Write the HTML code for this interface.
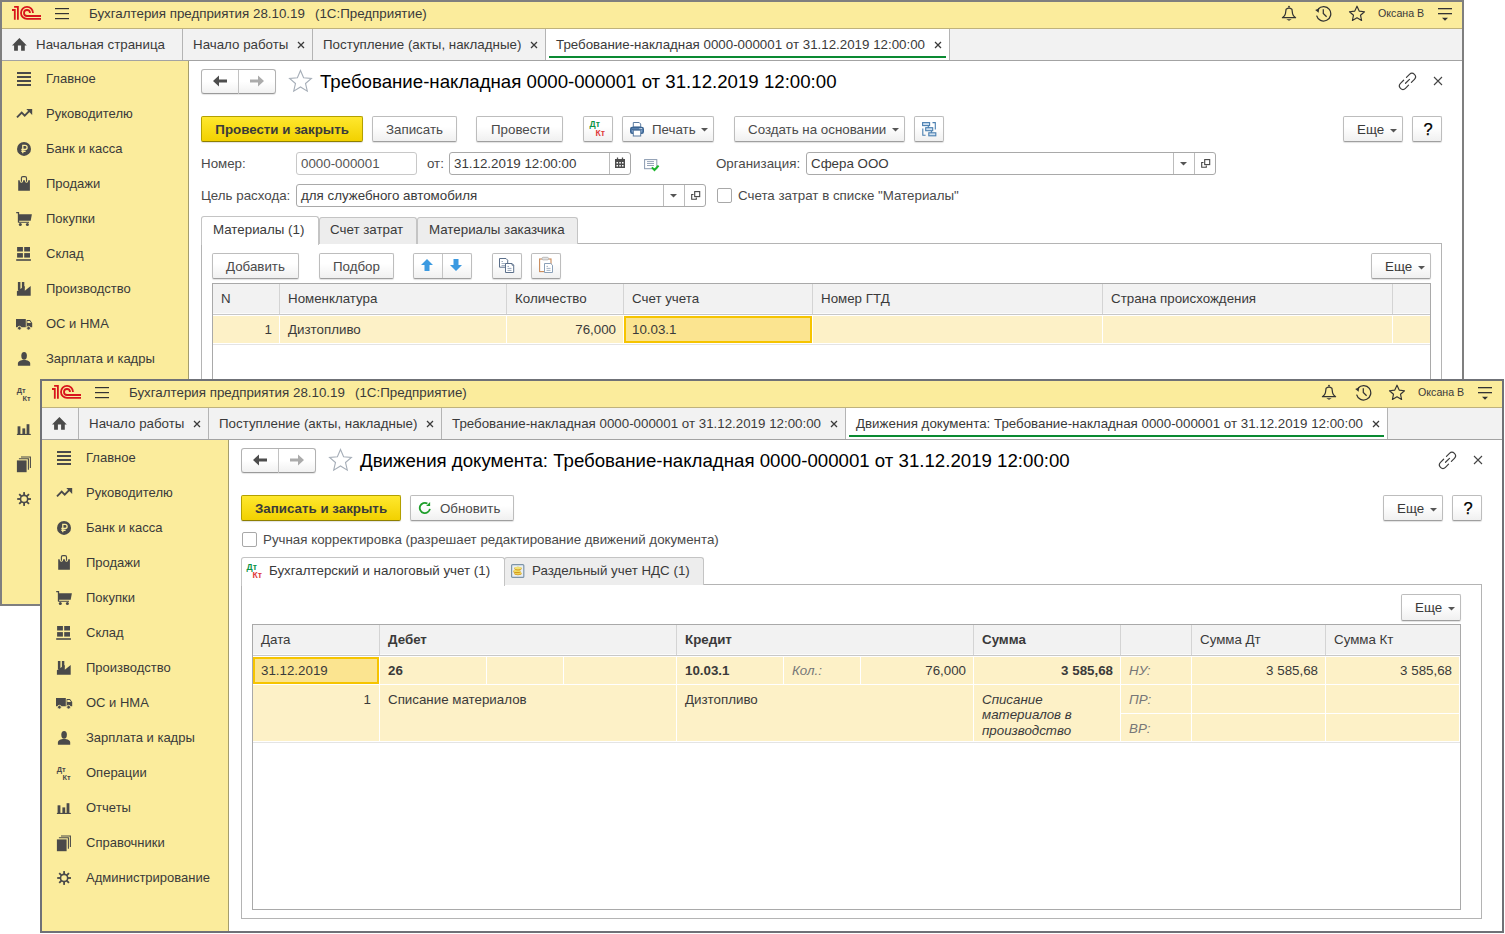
<!DOCTYPE html><html><head><meta charset="utf-8"><style>
html,body{margin:0;padding:0;background:#fff;width:1505px;height:934px;overflow:hidden;position:relative;font-family:"Liberation Sans",sans-serif;}
.t{position:absolute;white-space:pre;line-height:1;font-family:"Liberation Sans",sans-serif;}
.b{position:absolute;}
.win{position:absolute;overflow:hidden;background:#fff;}
</style></head><body>
<div class="win" style="left:0px;top:0px;width:1464px;height:606px;">
<div class="b" style="left:0px;top:0px;width:1464px;height:2px;background:#7f7f7f;"></div>
<div class="b" style="left:0px;top:604px;width:1464px;height:2px;background:#7f7f7f;"></div>
<div class="b" style="left:0px;top:0px;width:2px;height:606px;background:#7f7f7f;"></div>
<div class="b" style="left:1462px;top:0px;width:2px;height:606px;background:#7f7f7f;"></div>
<div class="b" style="left:2px;top:2px;width:1460px;height:26px;background:#fbec9c;"></div>
<div class="b" style="left:2px;top:28px;width:1460px;height:1px;background:#bfb27c;"></div>
<svg class="b" style="left:8px;top:2px;" width="40" height="22" viewBox="0 0 40 22"><g fill="none" stroke="#d8141c" stroke-width="1.8"><path d="M4 8H6.8V17.8"/><path d="M6.1 4.8H9.9V17.8"/><path d="M25 10.9A6 6 0 1 0 19 16.9H33"/><path d="M22 11A3 3 0 1 0 19 14H33"/></g></svg>
<svg class="b" style="left:55px;top:8px;" width="15" height="12" viewBox="0 0 15 12"><g fill="#333"><rect x="0" y="0" width="14" height="1.2"/><rect x="0" y="5" width="14" height="1.2"/><rect x="0" y="10" width="14" height="1.2"/></g></svg>
<div class="t" style="left:89px;top:6.72px;font-size:13.33px;color:#3a3a3a;">Бухгалтерия предприятия 28.10.19</div>
<div class="t" style="left:315px;top:6.72px;font-size:13.33px;color:#3a3a3a;">(1С:Предприятие)</div>
<svg class="b" style="left:1280px;top:4px;" width="18" height="18" viewBox="0 0 18 18"><circle cx="9" cy="2.7" r="0.9" fill="#333"/><path d="M6.1 5.2Q9 3 11.9 5.2L12.6 9.8Q13 12 15.6 13.7H2.4Q5 12 5.4 9.8Z" fill="none" stroke="#333" stroke-width="1.2" stroke-linejoin="round"/><path d="M6.3 15.3H11.7L9 16.8Z" fill="#333"/></svg>
<svg class="b" style="left:1314px;top:4px;" width="18" height="18" viewBox="0 0 18 18"><path d="M2.6 11.6A7.2 7.2 0 1 0 4.2 5" fill="none" stroke="#333" stroke-width="1.25"/><path d="M1.2 6.1 5.3 4.3 4.6 8.7z" fill="#333"/><path d="M9.3 5.3V9.4L12.6 12.7" fill="none" stroke="#333" stroke-width="1.25"/></svg>
<svg class="b" style="left:1348px;top:5px;" width="18" height="17" viewBox="0 0 18 17"><path d="M9 1.2l2.2 4.9 5.3.6-4 3.5 1.1 5.3L9 12.8l-4.6 2.7 1.1-5.3-4-3.5 5.3-.6z" fill="none" stroke="#333" stroke-width="1.15" stroke-linejoin="round"/></svg>
<div class="t" style="left:1378px;top:7.97px;font-size:10.67px;color:#3a3a3a;">Оксана В</div>
<svg class="b" style="left:1437px;top:7px;" width="16" height="15" viewBox="0 0 16 15"><g fill="#333"><rect x="1" y="1" width="14" height="1.3"/><rect x="1" y="6" width="14" height="1.3"/><path d="M5 10.8h6L8 13.8z"/></g></svg>
<div class="b" style="left:2px;top:29px;width:1460px;height:31px;background:#f2f2f2;"></div>
<div class="b" style="left:2px;top:60px;width:1460px;height:1px;background:#a3a3a3;"></div>
<div class="b" style="left:182px;top:29px;width:1px;height:31px;background:#b4b4b4;"></div>
<svg class="b" style="left:12px;top:38px;" width="16" height="14" viewBox="0 0 16 14"><path d="M7.4 0 14.8 7.5H12.8V12.7H9.1V7.5H5.9V12.7H2.1V7.5H0Z" fill="#4a4a4a"/></svg>
<div class="t" style="left:36px;top:37.72px;font-size:13.33px;color:#3a3a3a;">Начальная страница</div>
<div class="b" style="left:312px;top:29px;width:1px;height:31px;background:#b4b4b4;"></div>
<div class="t" style="left:193px;top:37.72px;font-size:13.33px;color:#3a3a3a;">Начало работы</div>
<svg class="b" style="left:297px;top:41px;" width="8" height="8" viewBox="0 0 8 8"><path d="M1 1 7 7M7 1 1 7" stroke="#3a3a3a" stroke-width="1.25"/></svg>
<div class="b" style="left:545px;top:29px;width:1px;height:31px;background:#b4b4b4;"></div>
<div class="t" style="left:323px;top:37.72px;font-size:13.33px;color:#3a3a3a;">Поступление (акты, накладные)</div>
<svg class="b" style="left:530px;top:41px;" width="8" height="8" viewBox="0 0 8 8"><path d="M1 1 7 7M7 1 1 7" stroke="#3a3a3a" stroke-width="1.25"/></svg>
<div class="b" style="left:546px;top:29px;width:403px;height:31px;background:#ffffff;"></div>
<div class="b" style="left:549px;top:56px;width:397px;height:2px;background:#0a8a32;"></div>
<div class="b" style="left:949px;top:29px;width:1px;height:31px;background:#b4b4b4;"></div>
<div class="t" style="left:556px;top:37.72px;font-size:13.33px;color:#3a3a3a;">Требование-накладная 0000-000001 от 31.12.2019 12:00:00</div>
<svg class="b" style="left:934px;top:41px;" width="8" height="8" viewBox="0 0 8 8"><path d="M1 1 7 7M7 1 1 7" stroke="#3a3a3a" stroke-width="1.25"/></svg>
<div class="b" style="left:2px;top:61px;width:186px;height:543px;background:#fbec9c;"></div>
<div class="b" style="left:188px;top:61px;width:1px;height:543px;background:#a59d6d;"></div>
<svg class="b" style="left:16px;top:70px;" width="16" height="16" viewBox="0 0 16 16"><g fill="#4a4a4a"><rect x="1" y="2" width="14" height="2"/><rect x="1" y="6" width="14" height="2"/><rect x="1" y="10" width="14" height="2"/><rect x="1" y="14" width="14" height="2"/></g></svg>
<div class="t" style="left:46px;top:72px;font-size:13px;color:#3a3a3a;">Главное</div>
<svg class="b" style="left:16px;top:105px;" width="17" height="16" viewBox="0 0 17 16"><path d="M1 12.3 5.7 7.6 8.7 10.6 13.4 5.9" fill="none" stroke="#4a4a4a" stroke-width="1.9"/><path d="M10.3 4H16.2V9.9z" fill="#4a4a4a"/></svg>
<div class="t" style="left:46px;top:107px;font-size:13px;color:#3a3a3a;">Руководителю</div>
<svg class="b" style="left:16px;top:140px;" width="16" height="17" viewBox="0 0 16 17"><circle cx="8" cy="8.9" r="7" fill="#4a4a4a"/><path d="M6.8 13.3V5.3H9a2.1 2.1 0 0 1 0 4.2H5.3M5.3 11.4H9.6" fill="none" stroke="#fbec9c" stroke-width="1.3"/></svg>
<div class="t" style="left:46px;top:142px;font-size:13px;color:#3a3a3a;">Банк и касса</div>
<svg class="b" style="left:16px;top:175px;" width="16" height="17" viewBox="0 0 16 17"><path d="M2.2 5.2H3.7V6.1A1.7 1.7 0 0 0 7.1 6.1V5.2H8.9V6.1A1.65 1.65 0 0 0 12.2 6.1V5.2H13.9V15.8H2.2Z" fill="#4a4a4a"/><path d="M5.4 6.8V3.1Q5.4 1.6 6.9 1.6H9Q10.5 1.6 10.5 3.1V6.8" fill="none" stroke="#4a4a4a" stroke-width="1.15"/></svg>
<div class="t" style="left:46px;top:177px;font-size:13px;color:#3a3a3a;">Продажи</div>
<svg class="b" style="left:16px;top:210px;" width="17" height="17" viewBox="0 0 17 17"><path d="M0.2 2.6H2.5V12.4" fill="none" stroke="#4a4a4a" stroke-width="1.3"/><path d="M2.1 4.2H15.9L14.7 10.7H2.1z" fill="#4a4a4a"/><rect x="2.5" y="11.8" width="10.5" height="1" fill="#4a4a4a"/><circle cx="4.3" cy="14.6" r="1.5" fill="#4a4a4a"/><circle cx="11.4" cy="14.6" r="1.5" fill="#4a4a4a"/></svg>
<div class="t" style="left:46px;top:212px;font-size:13px;color:#3a3a3a;">Покупки</div>
<svg class="b" style="left:16px;top:245px;" width="16" height="17" viewBox="0 0 16 17"><g fill="#4a4a4a"><rect x="1.1" y="2" width="5.8" height="4.5"/><rect x="8.2" y="2" width="5.8" height="4.5"/><rect x="1.1" y="8.1" width="5.8" height="4.5"/><rect x="8.2" y="8.1" width="5.8" height="4.5"/><rect x="0.2" y="14.2" width="14.7" height="1.6"/></g></svg>
<div class="t" style="left:46px;top:247px;font-size:13px;color:#3a3a3a;">Склад</div>
<svg class="b" style="left:16px;top:280px;" width="16" height="17" viewBox="0 0 16 17"><g fill="#4a4a4a"><path d="M0.9 15.7V11.3L8.8 5.9V10.8L14.7 5.9V15.7Z"/><rect x="1.9" y="2" width="2.5" height="8"/><rect x="5.9" y="2" width="2.4" height="6"/></g></svg>
<div class="t" style="left:46px;top:282px;font-size:13px;color:#3a3a3a;">Производство</div>
<svg class="b" style="left:16px;top:315px;" width="17" height="17" viewBox="0 0 17 17"><path d="M0 3.9H9.8V12.3H0zM10.6 5H14L16.2 8V12.3H10.6z" fill="#4a4a4a"/><path d="M11.3 6H13.6L15 8H11.3z" fill="#fbec9c"/><circle cx="3.4" cy="13.2" r="1.9" fill="#4a4a4a" stroke="#fbec9c" stroke-width="0.9"/><circle cx="12.6" cy="13.2" r="1.9" fill="#4a4a4a" stroke="#fbec9c" stroke-width="0.9"/></svg>
<div class="t" style="left:46px;top:317px;font-size:13px;color:#3a3a3a;">ОС и НМА</div>
<svg class="b" style="left:16px;top:350px;" width="16" height="17" viewBox="0 0 16 17"><ellipse cx="8.1" cy="5.85" rx="2.8" ry="3.95" fill="#4a4a4a"/><path d="M1.9 15.7V13.6C1.9 11.1 4.5 9.9 8.1 9.9S14.2 11.1 14.2 13.6V15.7Z" fill="#4a4a4a"/></svg>
<div class="t" style="left:46px;top:352px;font-size:13px;color:#3a3a3a;">Зарплата и кадры</div>
<svg class="b" style="left:16px;top:385px;" width="18" height="18" viewBox="0 0 18 18"><text x="0.8" y="7.6" font-family="Liberation Sans" font-size="7.4" font-weight="bold" fill="#4a4a4a">Дт</text><text x="6.4" y="16.2" font-family="Liberation Sans" font-size="7.4" font-weight="bold" fill="#4a4a4a">Кт</text></svg>
<div class="t" style="left:46px;top:387px;font-size:13px;color:#3a3a3a;">Операции</div>
<svg class="b" style="left:16px;top:420px;" width="16" height="17" viewBox="0 0 16 17"><g fill="#4a4a4a"><rect x="1.6" y="6.3" width="2.8" height="8"/><rect x="6.4" y="8.4" width="2.8" height="6"/><rect x="10.6" y="4.2" width="2.8" height="10"/><rect x="0.9" y="13.9" width="13.9" height="1.1"/></g></svg>
<div class="t" style="left:46px;top:422px;font-size:13px;color:#3a3a3a;">Отчеты</div>
<svg class="b" style="left:16px;top:455px;" width="16" height="18" viewBox="0 0 16 18"><rect x="0.9" y="5.4" width="9.7" height="11.8" fill="#4a4a4a"/><path d="M2.9 3.8H12.4V14.8M5 2H14.4V13" fill="none" stroke="#4a4a4a" stroke-width="1.1"/></svg>
<div class="t" style="left:46px;top:457px;font-size:13px;color:#3a3a3a;">Справочники</div>
<svg class="b" style="left:16px;top:490px;" width="17" height="17" viewBox="0 0 17 17"><rect x="7.2" y="2.1" width="1.8" height="13.8" fill="#4a4a4a" transform="rotate(0 8.1 9)"/><rect x="7.2" y="2.1" width="1.8" height="13.8" fill="#4a4a4a" transform="rotate(45 8.1 9)"/><rect x="7.2" y="2.1" width="1.8" height="13.8" fill="#4a4a4a" transform="rotate(90 8.1 9)"/><rect x="7.2" y="2.1" width="1.8" height="13.8" fill="#4a4a4a" transform="rotate(135 8.1 9)"/><circle cx="8.1" cy="9" r="3.6" fill="none" stroke="#4a4a4a" stroke-width="1.6"/><circle cx="8.1" cy="9" r="2.8" fill="#fbec9c"/></svg>
<div class="t" style="left:46px;top:492px;font-size:13px;color:#3a3a3a;">Администрирование</div>
<div class="b" style="left:201px;top:69px;width:75px;height:25px;background:linear-gradient(#fff 50%,#f1f1f1);border:1px solid #b2b2b2;border-bottom-color:#9a9a9a;border-radius:3px;box-sizing:border-box;box-shadow:0 1px 1px rgba(0,0,0,.1);"></div>
<div class="b" style="left:238px;top:70px;width:1px;height:24px;background:#c2c2c2;"></div>
<svg class="b" style="left:212px;top:75px;" width="16" height="12" viewBox="0 0 16 12"><path d="M1 6 7 0.5V4.5H15V7.5H7V11.5z" fill="#4d4d4d"/></svg>
<svg class="b" style="left:249px;top:75px;" width="16" height="12" viewBox="0 0 16 12"><path d="M15 6 9 0.5V4.5H1V7.5H9V11.5z" fill="#ababab"/></svg>
<svg class="b" style="left:288px;top:69px;" width="25" height="24" viewBox="0 0 25 24"><path d="M12.5 1.5l3.1 7.2 7.8.7-5.9 5.1 1.8 7.6-6.8-4.1-6.8 4.1 1.8-7.6L1.6 9.4l7.8-.7z" fill="none" stroke="#a6aeb8" stroke-width="1.1" stroke-linejoin="miter"/></svg>
<div class="t" style="left:320px;top:73.2px;font-size:18.67px;color:#000;">Требование-накладная 0000-000001 от 31.12.2019 12:00:00</div>
<svg class="b" style="left:1396px;top:69px;" width="24" height="24" viewBox="0 0 24 24"><g transform="rotate(-45 11.5 12.3) translate(11.5 12.3)" fill="none" stroke="#3d3d3d" stroke-width="1.2" stroke-linecap="round"><path d="M-2 -3.5H-6.4A3.5 3.5 0 0 0 -6.4 3.5H-2"/><path d="M2 -3.5H6.3A3.5 3.5 0 0 1 6.3 3.5H2"/><path d="M-2.8 0H2.8"/></g></svg>
<svg class="b" style="left:1433px;top:76px;" width="10" height="10" viewBox="0 0 10 10"><path d="M1 1 9 9M9 1 1 9" stroke="#444" stroke-width="1.1"/></svg>
<div class="b" style="left:201px;top:116px;width:162px;height:26px;background:linear-gradient(#ffe82e,#f2d100);border:1px solid #b3a000;border-bottom-color:#8e7f00;border-radius:2px;box-sizing:border-box;box-shadow:0 1px 1px rgba(0,0,0,.12);"></div>
<div class="t" style="left:215.3px;top:122.72px;font-size:13.33px;color:#3a3a3a;font-weight:bold;">Провести и закрыть</div>
<div class="b" style="left:372px;top:116px;width:85px;height:26px;background:linear-gradient(#ffffff 40%,#f0f0f0);border:1px solid #bdbdbd;border-bottom-color:#9f9f9f;border-radius:2px;box-sizing:border-box;box-shadow:0 1px 1px rgba(0,0,0,.12);"></div>
<div class="t" style="left:386px;top:122.72px;font-size:13.33px;color:#4a4a4a;">Записать</div>
<div class="b" style="left:476px;top:116px;width:87px;height:26px;background:linear-gradient(#ffffff 40%,#f0f0f0);border:1px solid #bdbdbd;border-bottom-color:#9f9f9f;border-radius:2px;box-sizing:border-box;box-shadow:0 1px 1px rgba(0,0,0,.12);"></div>
<div class="t" style="left:491px;top:122.72px;font-size:13.33px;color:#4a4a4a;">Провести</div>
<div class="b" style="left:583px;top:116px;width:30px;height:26px;background:linear-gradient(#ffffff 40%,#f0f0f0);border:1px solid #bdbdbd;border-bottom-color:#9f9f9f;border-radius:2px;box-sizing:border-box;box-shadow:0 1px 1px rgba(0,0,0,.12);"></div>
<svg class="b" style="left:589px;top:120px;" width="22" height="18" viewBox="0 0 22 18"><text x="0.6" y="7.4" font-family="Liberation Sans" font-size="8.6" font-weight="bold" fill="#0b9444">Дт</text><text x="6.6" y="15.6" font-family="Liberation Sans" font-size="8.6" font-weight="bold" fill="#df3b3b">Кт</text></svg>
<div class="b" style="left:622px;top:116px;width:92px;height:26px;background:linear-gradient(#ffffff 40%,#f0f0f0);border:1px solid #bdbdbd;border-bottom-color:#9f9f9f;border-radius:2px;box-sizing:border-box;box-shadow:0 1px 1px rgba(0,0,0,.12);"></div>
<svg class="b" style="left:629px;top:121px;" width="17" height="17" viewBox="0 0 17 17"><path d="M4.3 1.5H10.2L11.7 3V6H4.3Z" fill="#fff" stroke="#5a7ba0" stroke-width="1"/><rect x="1.8" y="6.6" width="12.4" height="5.6" rx="1.4" fill="#7ea3cf" stroke="#3b6593" stroke-width="1.6"/><path d="M2.6 8.4H13.4" stroke="#3b6593" stroke-width="1"/><rect x="10.6" y="7.2" width="1" height="1" fill="#fff"/><rect x="12.2" y="7.2" width="1" height="1" fill="#fff"/><rect x="4.3" y="9.2" width="7.4" height="5.8" fill="#fff" stroke="#5a7ba0" stroke-width="1"/></svg>
<div class="t" style="left:652px;top:122.72px;font-size:13.33px;color:#4a4a4a;">Печать</div>
<svg class="b" style="left:701px;top:128px;" width="7" height="4" viewBox="0 0 7 4"><path d="M0 0H7L3.5 3.5Z" fill="#555"/></svg>
<div class="b" style="left:734px;top:116px;width:171px;height:26px;background:linear-gradient(#ffffff 40%,#f0f0f0);border:1px solid #bdbdbd;border-bottom-color:#9f9f9f;border-radius:2px;box-sizing:border-box;box-shadow:0 1px 1px rgba(0,0,0,.12);"></div>
<div class="t" style="left:748px;top:122.72px;font-size:13.33px;color:#4a4a4a;">Создать на основании</div>
<svg class="b" style="left:892px;top:128px;" width="7" height="4" viewBox="0 0 7 4"><path d="M0 0H7L3.5 3.5Z" fill="#555"/></svg>
<div class="b" style="left:914px;top:116px;width:30px;height:26px;background:linear-gradient(#ffffff 40%,#f0f0f0);border:1px solid #bdbdbd;border-bottom-color:#9f9f9f;border-radius:2px;box-sizing:border-box;box-shadow:0 1px 1px rgba(0,0,0,.12);"></div>
<svg class="b" style="left:920px;top:120px;" width="18" height="18" viewBox="0 0 18 18"><g stroke="#4a7fb0" stroke-width="1.1" fill="#cfe0f0"><rect x="2.6" y="2.6" width="7" height="3"/><rect x="5.7" y="7.7" width="7" height="3"/><rect x="8.8" y="12.8" width="7" height="3"/></g><path d="M8.3 5.6V7.7M11.4 10.7V12.8M12.5 2.6H15.3V9.5M2.8 8.5V15.3H5.6" fill="none" stroke="#4a7fb0" stroke-width="1.1"/></svg>
<div class="b" style="left:1343px;top:116px;width:60px;height:26px;background:linear-gradient(#ffffff 40%,#f0f0f0);border:1px solid #bdbdbd;border-bottom-color:#9f9f9f;border-radius:2px;box-sizing:border-box;box-shadow:0 1px 1px rgba(0,0,0,.12);"></div>
<div class="t" style="left:1357px;top:122.72px;font-size:13.33px;color:#3a3a3a;">Еще</div>
<svg class="b" style="left:1390px;top:129px;" width="7" height="4" viewBox="0 0 7 4"><path d="M0 0H7L3.5 3.5Z" fill="#555"/></svg>
<div class="b" style="left:1412px;top:116px;width:30px;height:26px;background:linear-gradient(#ffffff 40%,#f0f0f0);border:1px solid #bdbdbd;border-bottom-color:#9f9f9f;border-radius:2px;box-sizing:border-box;box-shadow:0 1px 1px rgba(0,0,0,.12);"></div>
<div class="t" style="left:1423.5px;top:121.03px;font-size:16.5px;color:#000;-webkit-text-stroke:0.25px #000;">?</div>
<div class="t" style="left:201px;top:156.72px;font-size:13.33px;color:#4a4a4a;">Номер:</div>
<div class="b" style="left:296px;top:152px;width:121px;height:23px;border:1px solid #c8c8c8;border-radius:3px;box-sizing:border-box;background:#fff;"></div>
<div class="t" style="left:301px;top:156.72px;font-size:13.33px;color:#555;">0000-000001</div>
<div class="t" style="left:427px;top:156.72px;font-size:13.33px;color:#4a4a4a;">от:</div>
<div class="b" style="left:449px;top:152px;width:182px;height:23px;border:1px solid #a9a9a9;border-radius:3px;box-sizing:border-box;background:#fff;"></div>
<div class="t" style="left:454px;top:156.72px;font-size:13.33px;color:#3a3a3a;">31.12.2019 12:00:00</div>
<div class="b" style="left:609px;top:153px;width:1px;height:21px;background:#bcbcbc;"></div>
<svg class="b" style="left:614px;top:157px;" width="12" height="12" viewBox="0 0 12 12"><path d="M1 2h10v9H1z" fill="#4d4d4d"/><path d="M3.5 0.5v2.5M8.5 0.5v2.5" stroke="#4d4d4d" stroke-width="1.3"/><g fill="#fff"><rect x="2.5" y="5" width="1.5" height="1.5"/><rect x="5.3" y="5" width="1.5" height="1.5"/><rect x="8" y="5" width="1.5" height="1.5"/><rect x="2.5" y="8" width="1.5" height="1.5"/><rect x="5.3" y="8" width="1.5" height="1.5"/><rect x="8" y="8" width="1.5" height="1.5"/></g></svg>
<svg class="b" style="left:642px;top:157px;" width="19" height="15" viewBox="0 0 19 15"><rect x="2.6" y="2.6" width="12.2" height="9.1" fill="#fff" stroke="#8a9ab0" stroke-width="1"/><path d="M5 4.6H12M5 6.5H12M5 8.5H12" stroke="#8a9ab0" stroke-width=".9"/><path d="M9.9 10.4 12.5 13 16.6 8.6" fill="none" stroke="#1ab52a" stroke-width="2"/></svg>
<div class="t" style="left:716px;top:156.72px;font-size:13.33px;color:#4a4a4a;">Организация:</div>
<div class="b" style="left:806px;top:152px;width:410px;height:23px;border:1px solid #a9a9a9;border-radius:3px;box-sizing:border-box;background:#fff;"></div>
<div class="t" style="left:811px;top:156.72px;font-size:13.33px;color:#3a3a3a;">Сфера ООО</div>
<div class="b" style="left:1173px;top:153px;width:1px;height:21px;background:#bcbcbc;"></div>
<div class="b" style="left:1194px;top:153px;width:1px;height:21px;background:#bcbcbc;"></div>
<svg class="b" style="left:1180px;top:162px;" width="7" height="4" viewBox="0 0 7 4"><path d="M0 0H7L3.5 3.5Z" fill="#555"/></svg>
<svg class="b" style="left:1200px;top:157px;" width="12" height="12" viewBox="0 0 12 12"><rect x="4.7" y="2.6" width="5" height="5" fill="none" stroke="#444" stroke-width="1.1"/><path d="M3.5 5.5H1.7V10.2H6.3V8.5" fill="none" stroke="#444" stroke-width="1.1"/></svg>
<div class="t" style="left:201px;top:188.72px;font-size:13.33px;color:#4a4a4a;">Цель расхода:</div>
<div class="b" style="left:296px;top:184px;width:410px;height:23px;border:1px solid #a9a9a9;border-radius:3px;box-sizing:border-box;background:#fff;"></div>
<div class="t" style="left:301px;top:188.72px;font-size:13.33px;color:#3a3a3a;">для служебного автомобиля</div>
<div class="b" style="left:663px;top:185px;width:1px;height:21px;background:#bcbcbc;"></div>
<div class="b" style="left:684px;top:185px;width:1px;height:21px;background:#bcbcbc;"></div>
<svg class="b" style="left:670px;top:194px;" width="7" height="4" viewBox="0 0 7 4"><path d="M0 0H7L3.5 3.5Z" fill="#555"/></svg>
<svg class="b" style="left:690px;top:189px;" width="12" height="12" viewBox="0 0 12 12"><rect x="4.7" y="2.6" width="5" height="5" fill="none" stroke="#444" stroke-width="1.1"/><path d="M3.5 5.5H1.7V10.2H6.3V8.5" fill="none" stroke="#444" stroke-width="1.1"/></svg>
<div class="b" style="left:717px;top:188px;width:15px;height:15px;border:1px solid #a8a8a8;border-radius:2px;box-sizing:border-box;background:#fff;"></div>
<div class="t" style="left:738px;top:188.72px;font-size:13.33px;color:#4a4a4a;">Счета затрат в списке "Материалы"</div>
<div class="b" style="left:201px;top:243px;width:1241px;height:1px;background:#b4b4b4;"></div>
<div class="b" style="left:201px;top:243px;width:1px;height:363px;background:#b4b4b4;"></div>
<div class="b" style="left:1441px;top:243px;width:1px;height:363px;background:#b4b4b4;"></div>
<div class="b" style="left:319px;top:217px;width:98px;height:27px;background:#ededed;border:1px solid #c4c4c4;border-bottom:none;border-radius:3px 3px 0 0;box-sizing:border-box;"></div>
<div class="b" style="left:417px;top:217px;width:161px;height:27px;background:#ededed;border:1px solid #c4c4c4;border-bottom:none;border-radius:3px 3px 0 0;box-sizing:border-box;"></div>
<div class="b" style="left:201px;top:216px;width:118px;height:29px;background:#fff;border:1px solid #c4c4c4;border-bottom:none;border-radius:3px 3px 0 0;box-sizing:border-box;"></div>
<div class="t" style="left:213px;top:222.72px;font-size:13.33px;color:#3a3a3a;">Материалы (1)</div>
<div class="t" style="left:330px;top:222.72px;font-size:13.33px;color:#3a3a3a;">Счет затрат</div>
<div class="t" style="left:429px;top:222.72px;font-size:13.33px;color:#3a3a3a;">Материалы заказчика</div>
<div class="b" style="left:212px;top:253px;width:87px;height:26px;background:linear-gradient(#ffffff 40%,#f0f0f0);border:1px solid #bdbdbd;border-bottom-color:#9f9f9f;border-radius:2px;box-sizing:border-box;box-shadow:0 1px 1px rgba(0,0,0,.12);"></div>
<div class="t" style="left:226px;top:259.72px;font-size:13.33px;color:#4a4a4a;">Добавить</div>
<div class="b" style="left:319px;top:253px;width:75px;height:26px;background:linear-gradient(#ffffff 40%,#f0f0f0);border:1px solid #bdbdbd;border-bottom-color:#9f9f9f;border-radius:2px;box-sizing:border-box;box-shadow:0 1px 1px rgba(0,0,0,.12);"></div>
<div class="t" style="left:333px;top:259.72px;font-size:13.33px;color:#4a4a4a;">Подбор</div>
<div class="b" style="left:413px;top:253px;width:59px;height:26px;background:linear-gradient(#ffffff 40%,#f0f0f0);border:1px solid #bdbdbd;border-bottom-color:#9f9f9f;border-radius:2px;box-sizing:border-box;box-shadow:0 1px 1px rgba(0,0,0,.12);"></div>
<div class="b" style="left:442px;top:254px;width:1px;height:24px;background:#c4c4c4;"></div>
<svg class="b" style="left:420px;top:258px;" width="14" height="14" viewBox="0 0 14 14"><path d="M7 1 13 7H9.5V13h-5V7H1z" fill="#3b9ae1"/></svg>
<svg class="b" style="left:449px;top:258px;" width="14" height="14" viewBox="0 0 14 14"><path d="M7 13 13 7H9.5V1h-5V7H1z" fill="#3b9ae1"/></svg>
<div class="b" style="left:492px;top:253px;width:30px;height:26px;background:linear-gradient(#ffffff 40%,#f0f0f0);border:1px solid #bdbdbd;border-bottom-color:#9f9f9f;border-radius:2px;box-sizing:border-box;box-shadow:0 1px 1px rgba(0,0,0,.12);"></div>
<svg class="b" style="left:497px;top:256px;" width="18" height="18" viewBox="0 0 18 18"><path d="M2.5 2.5H9L10.7 4.2V11.2H2.5Z" fill="#fff" stroke="#5b6f8a" stroke-width="1"/><path d="M4.5 5.5H6M4.5 7.5H8.5M4.5 9.5H8.5" stroke="#9aa8ba" stroke-width=".9"/><path d="M8.5 7.5H15L16.7 9.2V16.5H8.5Z" fill="#fff" stroke="#5b6f8a" stroke-width="1"/><path d="M15 7.5V9.2H16.7" fill="none" stroke="#5b6f8a" stroke-width=".9"/><path d="M10.5 10.4H12M10.5 12.4H14.5M10.5 14.4H14.5" stroke="#8a9ab0" stroke-width=".9"/></svg>
<div class="b" style="left:531px;top:253px;width:30px;height:26px;background:linear-gradient(#ffffff 40%,#f0f0f0);border:1px solid #bdbdbd;border-bottom-color:#9f9f9f;border-radius:2px;box-sizing:border-box;box-shadow:0 1px 1px rgba(0,0,0,.12);"></div>
<svg class="b" style="left:537px;top:256px;" width="18" height="18" viewBox="0 0 18 18"><rect x="2.6" y="3" width="11.4" height="12.6" fill="#fff" stroke="#c98a5a" stroke-width="1.1"/><rect x="5" y="1.3" width="6.5" height="2.6" rx="1.2" fill="#e2e2e2" stroke="#b0b0b0" stroke-width=".8"/><path d="M7.5 7.5H13.8L15.5 9.2V16.5H7.5Z" fill="#fff" stroke="#8aa0b8" stroke-width="1"/><path d="M9.5 10.4H11M9.5 12.4H13.5M9.5 14.4H13.5" stroke="#9aabbf" stroke-width=".9"/></svg>
<div class="b" style="left:1371px;top:253px;width:60px;height:26px;background:linear-gradient(#ffffff 40%,#f0f0f0);border:1px solid #bdbdbd;border-bottom-color:#9f9f9f;border-radius:2px;box-sizing:border-box;box-shadow:0 1px 1px rgba(0,0,0,.12);"></div>
<div class="t" style="left:1385px;top:259.72px;font-size:13.33px;color:#3a3a3a;">Еще</div>
<svg class="b" style="left:1418px;top:266px;" width="7" height="4" viewBox="0 0 7 4"><path d="M0 0H7L3.5 3.5Z" fill="#555"/></svg>
<div class="b" style="left:212px;top:283px;width:1219px;height:1px;background:#a9a9a9;"></div>
<div class="b" style="left:212px;top:283px;width:1px;height:323px;background:#a9a9a9;"></div>
<div class="b" style="left:1430px;top:283px;width:1px;height:323px;background:#a9a9a9;"></div>
<div class="b" style="left:213px;top:284px;width:1217px;height:30px;background:#f2f2f2;"></div>
<div class="b" style="left:213px;top:313px;width:1217px;height:1px;background:#fbfbfb;"></div>
<div class="b" style="left:213px;top:314px;width:1217px;height:1px;background:#c8c8c8;"></div>
<div class="b" style="left:279px;top:284px;width:1px;height:30px;background:#d4d4d4;"></div>
<div class="b" style="left:506px;top:284px;width:1px;height:30px;background:#d4d4d4;"></div>
<div class="b" style="left:623px;top:284px;width:1px;height:30px;background:#d4d4d4;"></div>
<div class="b" style="left:812px;top:284px;width:1px;height:30px;background:#d4d4d4;"></div>
<div class="b" style="left:1102px;top:284px;width:1px;height:30px;background:#d4d4d4;"></div>
<div class="b" style="left:1392px;top:284px;width:1px;height:30px;background:#d4d4d4;"></div>
<div class="t" style="left:221px;top:291.72px;font-size:13.33px;color:#3a3a3a;">N</div>
<div class="t" style="left:288px;top:291.72px;font-size:13.33px;color:#3a3a3a;">Номенклатура</div>
<div class="t" style="left:515px;top:291.72px;font-size:13.33px;color:#3a3a3a;">Количество</div>
<div class="t" style="left:632px;top:291.72px;font-size:13.33px;color:#3a3a3a;">Счет учета</div>
<div class="t" style="left:821px;top:291.72px;font-size:13.33px;color:#3a3a3a;">Номер ГТД</div>
<div class="t" style="left:1111px;top:291.72px;font-size:13.33px;color:#3a3a3a;">Страна происхождения</div>
<div class="b" style="left:213px;top:315px;width:1217px;height:29px;background:#ffffff;"></div>
<div class="b" style="left:213px;top:316px;width:1217px;height:27px;background:#fdf1c7;"></div>
<div class="b" style="left:279px;top:316px;width:1px;height:27px;background:#ffffff;"></div>
<div class="b" style="left:506px;top:316px;width:1px;height:27px;background:#ffffff;"></div>
<div class="b" style="left:623px;top:316px;width:1px;height:27px;background:#ffffff;"></div>
<div class="b" style="left:812px;top:316px;width:1px;height:27px;background:#ffffff;"></div>
<div class="b" style="left:1102px;top:316px;width:1px;height:27px;background:#ffffff;"></div>
<div class="b" style="left:1392px;top:316px;width:1px;height:27px;background:#ffffff;"></div>
<div class="b" style="left:213px;top:344px;width:1217px;height:1px;background:#e4e4e4;"></div>
<div class="b" style="left:624px;top:316px;width:188px;height:27px;background:#fbe490;border:2px solid #f6c400;box-sizing:border-box;"></div>
<div class="t" style="left:-328px;width:600px;text-align:right;top:322.72px;font-size:13.33px;color:#3a3a3a;">1</div>
<div class="t" style="left:288px;top:322.72px;font-size:13.33px;color:#3a3a3a;">Дизтопливо</div>
<div class="t" style="left:16px;width:600px;text-align:right;top:322.72px;font-size:13.33px;color:#3a3a3a;">76,000</div>
<div class="t" style="left:632px;top:322.72px;font-size:13.33px;color:#3a3a3a;">10.03.1</div>
</div>
<div class="win" style="left:40px;top:379px;width:1464px;height:554px;">
<div class="b" style="left:0px;top:0px;width:1464px;height:2px;background:#6f7177;"></div>
<div class="b" style="left:0px;top:552px;width:1464px;height:2px;background:#6f7177;"></div>
<div class="b" style="left:0px;top:0px;width:2px;height:554px;background:#6f7177;"></div>
<div class="b" style="left:1462px;top:0px;width:2px;height:554px;background:#6f7177;"></div>
<div class="b" style="left:2px;top:2px;width:1460px;height:26px;background:#fbec9c;"></div>
<div class="b" style="left:2px;top:28px;width:1460px;height:1px;background:#bfb27c;"></div>
<svg class="b" style="left:8px;top:2px;" width="40" height="22" viewBox="0 0 40 22"><g fill="none" stroke="#d8141c" stroke-width="1.8"><path d="M4 8H6.8V17.8"/><path d="M6.1 4.8H9.9V17.8"/><path d="M25 10.9A6 6 0 1 0 19 16.9H33"/><path d="M22 11A3 3 0 1 0 19 14H33"/></g></svg>
<svg class="b" style="left:55px;top:8px;" width="15" height="12" viewBox="0 0 15 12"><g fill="#333"><rect x="0" y="0" width="14" height="1.2"/><rect x="0" y="5" width="14" height="1.2"/><rect x="0" y="10" width="14" height="1.2"/></g></svg>
<div class="t" style="left:89px;top:6.72px;font-size:13.33px;color:#3a3a3a;">Бухгалтерия предприятия 28.10.19</div>
<div class="t" style="left:315px;top:6.72px;font-size:13.33px;color:#3a3a3a;">(1С:Предприятие)</div>
<svg class="b" style="left:1280px;top:4px;" width="18" height="18" viewBox="0 0 18 18"><circle cx="9" cy="2.7" r="0.9" fill="#333"/><path d="M6.1 5.2Q9 3 11.9 5.2L12.6 9.8Q13 12 15.6 13.7H2.4Q5 12 5.4 9.8Z" fill="none" stroke="#333" stroke-width="1.2" stroke-linejoin="round"/><path d="M6.3 15.3H11.7L9 16.8Z" fill="#333"/></svg>
<svg class="b" style="left:1314px;top:4px;" width="18" height="18" viewBox="0 0 18 18"><path d="M2.6 11.6A7.2 7.2 0 1 0 4.2 5" fill="none" stroke="#333" stroke-width="1.25"/><path d="M1.2 6.1 5.3 4.3 4.6 8.7z" fill="#333"/><path d="M9.3 5.3V9.4L12.6 12.7" fill="none" stroke="#333" stroke-width="1.25"/></svg>
<svg class="b" style="left:1348px;top:5px;" width="18" height="17" viewBox="0 0 18 17"><path d="M9 1.2l2.2 4.9 5.3.6-4 3.5 1.1 5.3L9 12.8l-4.6 2.7 1.1-5.3-4-3.5 5.3-.6z" fill="none" stroke="#333" stroke-width="1.15" stroke-linejoin="round"/></svg>
<div class="t" style="left:1378px;top:7.97px;font-size:10.67px;color:#3a3a3a;">Оксана В</div>
<svg class="b" style="left:1437px;top:7px;" width="16" height="15" viewBox="0 0 16 15"><g fill="#333"><rect x="1" y="1" width="14" height="1.3"/><rect x="1" y="6" width="14" height="1.3"/><path d="M5 10.8h6L8 13.8z"/></g></svg>
<div class="b" style="left:2px;top:29px;width:1460px;height:31px;background:#f2f2f2;"></div>
<div class="b" style="left:2px;top:60px;width:1460px;height:1px;background:#a3a3a3;"></div>
<div class="b" style="left:38px;top:29px;width:1px;height:31px;background:#b4b4b4;"></div>
<svg class="b" style="left:12px;top:38px;" width="16" height="14" viewBox="0 0 16 14"><path d="M7.4 0 14.8 7.5H12.8V12.7H9.1V7.5H5.9V12.7H2.1V7.5H0Z" fill="#4a4a4a"/></svg>
<div class="b" style="left:168px;top:29px;width:1px;height:31px;background:#b4b4b4;"></div>
<div class="t" style="left:49px;top:37.72px;font-size:13.33px;color:#3a3a3a;">Начало работы</div>
<svg class="b" style="left:153px;top:41px;" width="8" height="8" viewBox="0 0 8 8"><path d="M1 1 7 7M7 1 1 7" stroke="#3a3a3a" stroke-width="1.25"/></svg>
<div class="b" style="left:401px;top:29px;width:1px;height:31px;background:#b4b4b4;"></div>
<div class="t" style="left:179px;top:37.72px;font-size:13.33px;color:#3a3a3a;">Поступление (акты, накладные)</div>
<svg class="b" style="left:386px;top:41px;" width="8" height="8" viewBox="0 0 8 8"><path d="M1 1 7 7M7 1 1 7" stroke="#3a3a3a" stroke-width="1.25"/></svg>
<div class="b" style="left:805px;top:29px;width:1px;height:31px;background:#b4b4b4;"></div>
<div class="t" style="left:412px;top:37.72px;font-size:13.33px;color:#3a3a3a;">Требование-накладная 0000-000001 от 31.12.2019 12:00:00</div>
<svg class="b" style="left:790px;top:41px;" width="8" height="8" viewBox="0 0 8 8"><path d="M1 1 7 7M7 1 1 7" stroke="#3a3a3a" stroke-width="1.25"/></svg>
<div class="b" style="left:806px;top:29px;width:541px;height:31px;background:#ffffff;"></div>
<div class="b" style="left:809px;top:56px;width:535px;height:2px;background:#0a8a32;"></div>
<div class="b" style="left:1347px;top:29px;width:1px;height:31px;background:#b4b4b4;"></div>
<div class="t" style="left:816px;top:37.72px;font-size:13.33px;color:#3a3a3a;">Движения документа: Требование-накладная 0000-000001 от 31.12.2019 12:00:00</div>
<svg class="b" style="left:1332px;top:41px;" width="8" height="8" viewBox="0 0 8 8"><path d="M1 1 7 7M7 1 1 7" stroke="#3a3a3a" stroke-width="1.25"/></svg>
<div class="b" style="left:2px;top:61px;width:186px;height:491px;background:#fbec9c;"></div>
<div class="b" style="left:188px;top:61px;width:1px;height:491px;background:#a59d6d;"></div>
<svg class="b" style="left:16px;top:70px;" width="16" height="16" viewBox="0 0 16 16"><g fill="#4a4a4a"><rect x="1" y="2" width="14" height="2"/><rect x="1" y="6" width="14" height="2"/><rect x="1" y="10" width="14" height="2"/><rect x="1" y="14" width="14" height="2"/></g></svg>
<div class="t" style="left:46px;top:72px;font-size:13px;color:#3a3a3a;">Главное</div>
<svg class="b" style="left:16px;top:105px;" width="17" height="16" viewBox="0 0 17 16"><path d="M1 12.3 5.7 7.6 8.7 10.6 13.4 5.9" fill="none" stroke="#4a4a4a" stroke-width="1.9"/><path d="M10.3 4H16.2V9.9z" fill="#4a4a4a"/></svg>
<div class="t" style="left:46px;top:107px;font-size:13px;color:#3a3a3a;">Руководителю</div>
<svg class="b" style="left:16px;top:140px;" width="16" height="17" viewBox="0 0 16 17"><circle cx="8" cy="8.9" r="7" fill="#4a4a4a"/><path d="M6.8 13.3V5.3H9a2.1 2.1 0 0 1 0 4.2H5.3M5.3 11.4H9.6" fill="none" stroke="#fbec9c" stroke-width="1.3"/></svg>
<div class="t" style="left:46px;top:142px;font-size:13px;color:#3a3a3a;">Банк и касса</div>
<svg class="b" style="left:16px;top:175px;" width="16" height="17" viewBox="0 0 16 17"><path d="M2.2 5.2H3.7V6.1A1.7 1.7 0 0 0 7.1 6.1V5.2H8.9V6.1A1.65 1.65 0 0 0 12.2 6.1V5.2H13.9V15.8H2.2Z" fill="#4a4a4a"/><path d="M5.4 6.8V3.1Q5.4 1.6 6.9 1.6H9Q10.5 1.6 10.5 3.1V6.8" fill="none" stroke="#4a4a4a" stroke-width="1.15"/></svg>
<div class="t" style="left:46px;top:177px;font-size:13px;color:#3a3a3a;">Продажи</div>
<svg class="b" style="left:16px;top:210px;" width="17" height="17" viewBox="0 0 17 17"><path d="M0.2 2.6H2.5V12.4" fill="none" stroke="#4a4a4a" stroke-width="1.3"/><path d="M2.1 4.2H15.9L14.7 10.7H2.1z" fill="#4a4a4a"/><rect x="2.5" y="11.8" width="10.5" height="1" fill="#4a4a4a"/><circle cx="4.3" cy="14.6" r="1.5" fill="#4a4a4a"/><circle cx="11.4" cy="14.6" r="1.5" fill="#4a4a4a"/></svg>
<div class="t" style="left:46px;top:212px;font-size:13px;color:#3a3a3a;">Покупки</div>
<svg class="b" style="left:16px;top:245px;" width="16" height="17" viewBox="0 0 16 17"><g fill="#4a4a4a"><rect x="1.1" y="2" width="5.8" height="4.5"/><rect x="8.2" y="2" width="5.8" height="4.5"/><rect x="1.1" y="8.1" width="5.8" height="4.5"/><rect x="8.2" y="8.1" width="5.8" height="4.5"/><rect x="0.2" y="14.2" width="14.7" height="1.6"/></g></svg>
<div class="t" style="left:46px;top:247px;font-size:13px;color:#3a3a3a;">Склад</div>
<svg class="b" style="left:16px;top:280px;" width="16" height="17" viewBox="0 0 16 17"><g fill="#4a4a4a"><path d="M0.9 15.7V11.3L8.8 5.9V10.8L14.7 5.9V15.7Z"/><rect x="1.9" y="2" width="2.5" height="8"/><rect x="5.9" y="2" width="2.4" height="6"/></g></svg>
<div class="t" style="left:46px;top:282px;font-size:13px;color:#3a3a3a;">Производство</div>
<svg class="b" style="left:16px;top:315px;" width="17" height="17" viewBox="0 0 17 17"><path d="M0 3.9H9.8V12.3H0zM10.6 5H14L16.2 8V12.3H10.6z" fill="#4a4a4a"/><path d="M11.3 6H13.6L15 8H11.3z" fill="#fbec9c"/><circle cx="3.4" cy="13.2" r="1.9" fill="#4a4a4a" stroke="#fbec9c" stroke-width="0.9"/><circle cx="12.6" cy="13.2" r="1.9" fill="#4a4a4a" stroke="#fbec9c" stroke-width="0.9"/></svg>
<div class="t" style="left:46px;top:317px;font-size:13px;color:#3a3a3a;">ОС и НМА</div>
<svg class="b" style="left:16px;top:350px;" width="16" height="17" viewBox="0 0 16 17"><ellipse cx="8.1" cy="5.85" rx="2.8" ry="3.95" fill="#4a4a4a"/><path d="M1.9 15.7V13.6C1.9 11.1 4.5 9.9 8.1 9.9S14.2 11.1 14.2 13.6V15.7Z" fill="#4a4a4a"/></svg>
<div class="t" style="left:46px;top:352px;font-size:13px;color:#3a3a3a;">Зарплата и кадры</div>
<svg class="b" style="left:16px;top:385px;" width="18" height="18" viewBox="0 0 18 18"><text x="0.8" y="7.6" font-family="Liberation Sans" font-size="7.4" font-weight="bold" fill="#4a4a4a">Дт</text><text x="6.4" y="16.2" font-family="Liberation Sans" font-size="7.4" font-weight="bold" fill="#4a4a4a">Кт</text></svg>
<div class="t" style="left:46px;top:387px;font-size:13px;color:#3a3a3a;">Операции</div>
<svg class="b" style="left:16px;top:420px;" width="16" height="17" viewBox="0 0 16 17"><g fill="#4a4a4a"><rect x="1.6" y="6.3" width="2.8" height="8"/><rect x="6.4" y="8.4" width="2.8" height="6"/><rect x="10.6" y="4.2" width="2.8" height="10"/><rect x="0.9" y="13.9" width="13.9" height="1.1"/></g></svg>
<div class="t" style="left:46px;top:422px;font-size:13px;color:#3a3a3a;">Отчеты</div>
<svg class="b" style="left:16px;top:455px;" width="16" height="18" viewBox="0 0 16 18"><rect x="0.9" y="5.4" width="9.7" height="11.8" fill="#4a4a4a"/><path d="M2.9 3.8H12.4V14.8M5 2H14.4V13" fill="none" stroke="#4a4a4a" stroke-width="1.1"/></svg>
<div class="t" style="left:46px;top:457px;font-size:13px;color:#3a3a3a;">Справочники</div>
<svg class="b" style="left:16px;top:490px;" width="17" height="17" viewBox="0 0 17 17"><rect x="7.2" y="2.1" width="1.8" height="13.8" fill="#4a4a4a" transform="rotate(0 8.1 9)"/><rect x="7.2" y="2.1" width="1.8" height="13.8" fill="#4a4a4a" transform="rotate(45 8.1 9)"/><rect x="7.2" y="2.1" width="1.8" height="13.8" fill="#4a4a4a" transform="rotate(90 8.1 9)"/><rect x="7.2" y="2.1" width="1.8" height="13.8" fill="#4a4a4a" transform="rotate(135 8.1 9)"/><circle cx="8.1" cy="9" r="3.6" fill="none" stroke="#4a4a4a" stroke-width="1.6"/><circle cx="8.1" cy="9" r="2.8" fill="#fbec9c"/></svg>
<div class="t" style="left:46px;top:492px;font-size:13px;color:#3a3a3a;">Администрирование</div>
<div class="b" style="left:201px;top:69px;width:75px;height:25px;background:linear-gradient(#fff 50%,#f1f1f1);border:1px solid #b2b2b2;border-bottom-color:#9a9a9a;border-radius:3px;box-sizing:border-box;box-shadow:0 1px 1px rgba(0,0,0,.1);"></div>
<div class="b" style="left:238px;top:70px;width:1px;height:24px;background:#c2c2c2;"></div>
<svg class="b" style="left:212px;top:75px;" width="16" height="12" viewBox="0 0 16 12"><path d="M1 6 7 0.5V4.5H15V7.5H7V11.5z" fill="#4d4d4d"/></svg>
<svg class="b" style="left:249px;top:75px;" width="16" height="12" viewBox="0 0 16 12"><path d="M15 6 9 0.5V4.5H1V7.5H9V11.5z" fill="#ababab"/></svg>
<svg class="b" style="left:288px;top:69px;" width="25" height="24" viewBox="0 0 25 24"><path d="M12.5 1.5l3.1 7.2 7.8.7-5.9 5.1 1.8 7.6-6.8-4.1-6.8 4.1 1.8-7.6L1.6 9.4l7.8-.7z" fill="none" stroke="#a6aeb8" stroke-width="1.1" stroke-linejoin="miter"/></svg>
<div class="t" style="left:320px;top:73.2px;font-size:18.67px;color:#000;">Движения документа: Требование-накладная 0000-000001 от 31.12.2019 12:00:00</div>
<svg class="b" style="left:1396px;top:69px;" width="24" height="24" viewBox="0 0 24 24"><g transform="rotate(-45 11.5 12.3) translate(11.5 12.3)" fill="none" stroke="#3d3d3d" stroke-width="1.2" stroke-linecap="round"><path d="M-2 -3.5H-6.4A3.5 3.5 0 0 0 -6.4 3.5H-2"/><path d="M2 -3.5H6.3A3.5 3.5 0 0 1 6.3 3.5H2"/><path d="M-2.8 0H2.8"/></g></svg>
<svg class="b" style="left:1433px;top:76px;" width="10" height="10" viewBox="0 0 10 10"><path d="M1 1 9 9M9 1 1 9" stroke="#444" stroke-width="1.1"/></svg>
<div class="b" style="left:201px;top:116px;width:160px;height:26px;background:linear-gradient(#ffe82e,#f2d100);border:1px solid #b3a000;border-bottom-color:#8e7f00;border-radius:2px;box-sizing:border-box;box-shadow:0 1px 1px rgba(0,0,0,.12);"></div>
<div class="t" style="left:215px;top:122.72px;font-size:13.33px;color:#3a3a3a;font-weight:bold;">Записать и закрыть</div>
<div class="b" style="left:370px;top:116px;width:104px;height:26px;background:linear-gradient(#ffffff 40%,#f0f0f0);border:1px solid #bdbdbd;border-bottom-color:#9f9f9f;border-radius:2px;box-sizing:border-box;box-shadow:0 1px 1px rgba(0,0,0,.12);"></div>
<svg class="b" style="left:377px;top:121px;" width="16" height="16" viewBox="0 0 16 16"><path d="M12.9 8.8A5.1 5.1 0 1 1 10.4 3.5" fill="none" stroke="#1e9e2a" stroke-width="1.8"/><path d="M13.1 2V5.9H9.1Z" fill="#1e9e2a"/></svg>
<div class="t" style="left:400px;top:122.72px;font-size:13.33px;color:#4a4a4a;">Обновить</div>
<div class="b" style="left:1343px;top:116px;width:60px;height:26px;background:linear-gradient(#ffffff 40%,#f0f0f0);border:1px solid #bdbdbd;border-bottom-color:#9f9f9f;border-radius:2px;box-sizing:border-box;box-shadow:0 1px 1px rgba(0,0,0,.12);"></div>
<div class="t" style="left:1357px;top:122.72px;font-size:13.33px;color:#3a3a3a;">Еще</div>
<svg class="b" style="left:1390px;top:129px;" width="7" height="4" viewBox="0 0 7 4"><path d="M0 0H7L3.5 3.5Z" fill="#555"/></svg>
<div class="b" style="left:1412px;top:116px;width:30px;height:26px;background:linear-gradient(#ffffff 40%,#f0f0f0);border:1px solid #bdbdbd;border-bottom-color:#9f9f9f;border-radius:2px;box-sizing:border-box;box-shadow:0 1px 1px rgba(0,0,0,.12);"></div>
<div class="t" style="left:1423.5px;top:121.03px;font-size:16.5px;color:#000;-webkit-text-stroke:0.25px #000;">?</div>
<div class="b" style="left:202px;top:153px;width:15px;height:15px;border:1px solid #a8a8a8;border-radius:2px;box-sizing:border-box;background:#fff;"></div>
<div class="t" style="left:223px;top:153.72px;font-size:13.33px;color:#4a4a4a;">Ручная корректировка (разрешает редактирование движений документа)</div>
<div class="b" style="left:201px;top:205px;width:1241px;height:1px;background:#b4b4b4;"></div>
<div class="b" style="left:201px;top:205px;width:1px;height:335px;background:#b4b4b4;"></div>
<div class="b" style="left:1441px;top:205px;width:1px;height:335px;background:#b4b4b4;"></div>
<div class="b" style="left:201px;top:539px;width:1241px;height:1px;background:#b4b4b4;"></div>
<div class="b" style="left:464px;top:178px;width:200px;height:28px;background:#ededed;border:1px solid #c4c4c4;border-bottom:none;border-radius:3px 3px 0 0;box-sizing:border-box;"></div>
<div class="b" style="left:201px;top:178px;width:264px;height:29px;background:#fff;border:1px solid #c4c4c4;border-bottom:none;border-radius:3px 3px 0 0;box-sizing:border-box;"></div>
<svg class="b" style="left:206px;top:183px;" width="20" height="18" viewBox="0 0 20 18"><text x="0.6" y="7.6" font-family="Liberation Sans" font-size="8.6" font-weight="bold" fill="#0b9444">Дт</text><text x="6.6" y="15.8" font-family="Liberation Sans" font-size="8.6" font-weight="bold" fill="#df3b3b">Кт</text></svg>
<div class="t" style="left:229px;top:184.72px;font-size:13.33px;color:#3a3a3a;">Бухгалтерский и налоговый учет (1)</div>
<svg class="b" style="left:471px;top:185px;" width="14" height="15" viewBox="0 0 14 15"><rect x="0.6" y="0.6" width="12.2" height="12.8" rx="1" fill="#e8eff6" stroke="#7d94a8" stroke-width="1.2"/><ellipse cx="6.95" cy="9.6" rx="3.75" ry="1.7" fill="#d49a1e"/><ellipse cx="6.95" cy="9.1" rx="3.5" ry="1.3" fill="#ecd35a"/><ellipse cx="5.95" cy="7.4" rx="3.65" ry="1.6" fill="#d49a1e"/><ellipse cx="5.95" cy="6.9" rx="3.4" ry="1.2" fill="#eedb62"/><ellipse cx="6.95" cy="4.6" rx="3.75" ry="1.8" fill="#d49a1e"/><ellipse cx="6.95" cy="4.1" rx="3.5" ry="1.35" fill="#f0e276"/></svg>
<div class="t" style="left:492px;top:184.72px;font-size:13.33px;color:#3a3a3a;">Раздельный учет НДС (1)</div>
<div class="b" style="left:1361px;top:215px;width:60px;height:27px;background:linear-gradient(#ffffff 40%,#f0f0f0);border:1px solid #bdbdbd;border-bottom-color:#9f9f9f;border-radius:2px;box-sizing:border-box;box-shadow:0 1px 1px rgba(0,0,0,.12);"></div>
<div class="t" style="left:1375px;top:221.72px;font-size:13.33px;color:#3a3a3a;">Еще</div>
<svg class="b" style="left:1408px;top:228px;" width="7" height="4" viewBox="0 0 7 4"><path d="M0 0H7L3.5 3.5Z" fill="#555"/></svg>
<div class="b" style="left:212px;top:245px;width:1209px;height:1px;background:#a9a9a9;"></div>
<div class="b" style="left:212px;top:245px;width:1px;height:286px;background:#a9a9a9;"></div>
<div class="b" style="left:1420px;top:245px;width:1px;height:286px;background:#a9a9a9;"></div>
<div class="b" style="left:212px;top:530px;width:1209px;height:1px;background:#a9a9a9;"></div>
<div class="b" style="left:213px;top:246px;width:1207px;height:30px;background:#f2f2f2;"></div>
<div class="b" style="left:213px;top:275px;width:1207px;height:1px;background:#fbfbfb;"></div>
<div class="b" style="left:213px;top:276px;width:1207px;height:1px;background:#c8c8c8;"></div>
<div class="b" style="left:339px;top:246px;width:1px;height:30px;background:#d4d4d4;"></div>
<div class="b" style="left:636px;top:246px;width:1px;height:30px;background:#d4d4d4;"></div>
<div class="b" style="left:933px;top:246px;width:1px;height:30px;background:#d4d4d4;"></div>
<div class="b" style="left:1080px;top:246px;width:1px;height:30px;background:#d4d4d4;"></div>
<div class="b" style="left:1151px;top:246px;width:1px;height:30px;background:#d4d4d4;"></div>
<div class="b" style="left:1285px;top:246px;width:1px;height:30px;background:#d4d4d4;"></div>
<div class="t" style="left:221px;top:253.72px;font-size:13.33px;color:#3a3a3a;">Дата</div>
<div class="t" style="left:348px;top:253.72px;font-size:13.33px;color:#3a3a3a;font-weight:bold;">Дебет</div>
<div class="t" style="left:645px;top:253.72px;font-size:13.33px;color:#3a3a3a;font-weight:bold;">Кредит</div>
<div class="t" style="left:942px;top:253.72px;font-size:13.33px;color:#3a3a3a;font-weight:bold;">Сумма</div>
<div class="t" style="left:1160px;top:253.72px;font-size:13.33px;color:#3a3a3a;">Сумма Дт</div>
<div class="t" style="left:1294px;top:253.72px;font-size:13.33px;color:#3a3a3a;">Сумма Кт</div>
<div class="b" style="left:213px;top:277px;width:1207px;height:86px;background:#ffffff;"></div>
<div class="b" style="left:213px;top:278px;width:1206px;height:27px;background:#fdf1c7;"></div>
<div class="b" style="left:213px;top:306px;width:1206px;height:56px;background:#fdf1c7;"></div>
<div class="b" style="left:339px;top:278px;width:1px;height:27px;background:#ffffff;"></div>
<div class="b" style="left:446px;top:278px;width:1px;height:27px;background:#ffffff;"></div>
<div class="b" style="left:523px;top:278px;width:1px;height:27px;background:#ffffff;"></div>
<div class="b" style="left:636px;top:278px;width:1px;height:27px;background:#ffffff;"></div>
<div class="b" style="left:743px;top:278px;width:1px;height:27px;background:#ffffff;"></div>
<div class="b" style="left:820px;top:278px;width:1px;height:27px;background:#ffffff;"></div>
<div class="b" style="left:933px;top:278px;width:1px;height:27px;background:#ffffff;"></div>
<div class="b" style="left:1080px;top:278px;width:1px;height:27px;background:#ffffff;"></div>
<div class="b" style="left:1151px;top:278px;width:1px;height:27px;background:#ffffff;"></div>
<div class="b" style="left:1285px;top:278px;width:1px;height:27px;background:#ffffff;"></div>
<div class="b" style="left:339px;top:306px;width:1px;height:56px;background:#ffffff;"></div>
<div class="b" style="left:636px;top:306px;width:1px;height:56px;background:#ffffff;"></div>
<div class="b" style="left:933px;top:306px;width:1px;height:56px;background:#ffffff;"></div>
<div class="b" style="left:1080px;top:306px;width:1px;height:56px;background:#ffffff;"></div>
<div class="b" style="left:1151px;top:306px;width:1px;height:56px;background:#ffffff;"></div>
<div class="b" style="left:1285px;top:306px;width:1px;height:56px;background:#ffffff;"></div>
<div class="b" style="left:1081px;top:334px;width:338px;height:1px;background:#ffffff;"></div>
<div class="b" style="left:213px;top:363px;width:1207px;height:1px;background:#e4e4e4;"></div>
<div class="b" style="left:213px;top:278px;width:126px;height:27px;background:#fbe490;border:2px solid #f6c400;box-sizing:border-box;"></div>
<div class="t" style="left:221px;top:284.72px;font-size:13.33px;color:#3a3a3a;">31.12.2019</div>
<div class="t" style="left:348px;top:284.72px;font-size:13.33px;color:#3a3a3a;font-weight:bold;">26</div>
<div class="t" style="left:645px;top:284.72px;font-size:13.33px;color:#3a3a3a;font-weight:bold;">10.03.1</div>
<div class="t" style="left:752px;top:284.72px;font-size:13.33px;color:#777;font-style:italic;">Кол.:</div>
<div class="t" style="left:326px;width:600px;text-align:right;top:284.72px;font-size:13.33px;color:#3a3a3a;">76,000</div>
<div class="t" style="left:473px;width:600px;text-align:right;top:284.72px;font-size:13.33px;color:#3a3a3a;font-weight:bold;">3 585,68</div>
<div class="t" style="left:1089px;top:284.72px;font-size:13.33px;color:#777;font-style:italic;">НУ:</div>
<div class="t" style="left:678px;width:600px;text-align:right;top:284.72px;font-size:13.33px;color:#3a3a3a;">3 585,68</div>
<div class="t" style="left:812px;width:600px;text-align:right;top:284.72px;font-size:13.33px;color:#3a3a3a;">3 585,68</div>
<div class="t" style="left:-269px;width:600px;text-align:right;top:313.72px;font-size:13.33px;color:#3a3a3a;">1</div>
<div class="t" style="left:348px;top:313.72px;font-size:13.33px;color:#3a3a3a;">Списание материалов</div>
<div class="t" style="left:645px;top:313.72px;font-size:13.33px;color:#3a3a3a;">Дизтопливо</div>
<div class="t" style="left:942px;top:313.72px;font-size:13.33px;color:#3a3a3a;font-style:italic;">Списание</div>
<div class="t" style="left:942px;top:329.22px;font-size:13.33px;color:#3a3a3a;font-style:italic;">материалов в</div>
<div class="t" style="left:942px;top:344.72px;font-size:13.33px;color:#3a3a3a;font-style:italic;">производство</div>
<div class="t" style="left:1089px;top:313.72px;font-size:13.33px;color:#777;font-style:italic;">ПР:</div>
<div class="t" style="left:1089px;top:342.72px;font-size:13.33px;color:#777;font-style:italic;">ВР:</div>
</div>
</body></html>
